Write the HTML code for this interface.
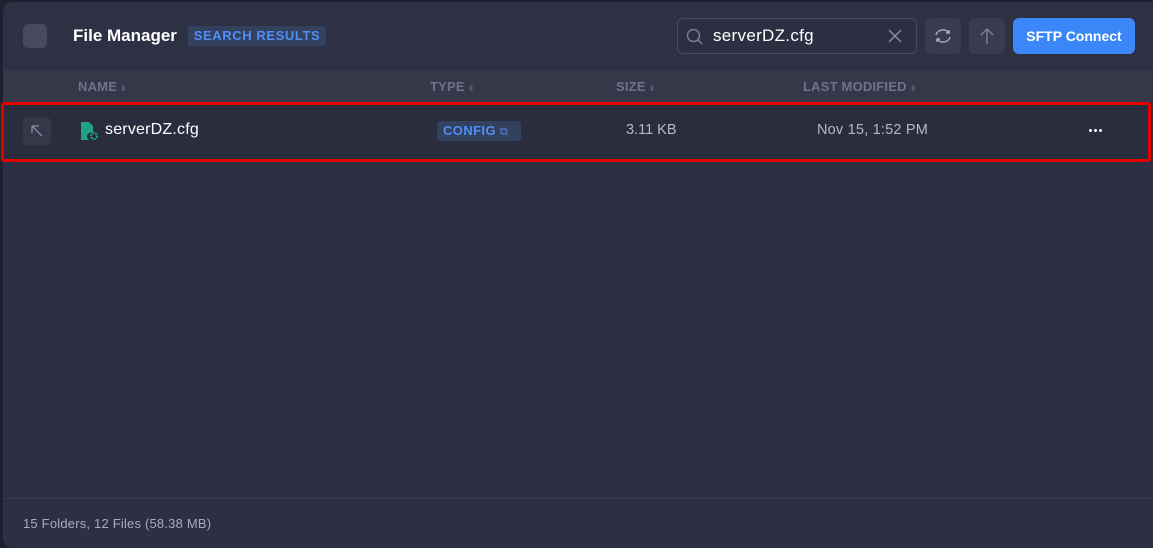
<!DOCTYPE html>
<html style="overflow:hidden;width:1153px;height:548px"><head><meta charset="utf-8"><style>
*{box-sizing:border-box;margin:0;padding:0}
body{width:1153px;height:548px;background:#1e2130;font-family:"Liberation Sans",sans-serif;overflow:hidden;position:relative}
.panel{position:absolute;left:3px;top:2px;width:1150px;height:546px;background:#2d3042;border-radius:10px 0 0 10px}
.top{position:absolute;left:3px;top:2px;width:1150px;height:68px;background:#2e3143;border-radius:10px 0 0 0}
.thead{position:absolute;left:3px;top:70px;width:1150px;height:32px;background:#353849}
.th{position:absolute;top:79px;font-size:13px;font-weight:bold;color:#6f7388;letter-spacing:0.2px}
.th span{font-size:8px;color:#555a6d;margin-left:3px}
.row{position:absolute;left:1px;top:102px;width:1150px;height:60px;border:3px solid #e50000;border-radius:3px;background:#2a2d3e}
.foot{position:absolute;left:3px;top:498px;width:1150px;height:1px;background:#393c4e}
</style></head><body>
<div class="panel"></div>
<div class="top"></div>
<div style="position:absolute;left:23px;top:24px;width:24px;height:24px;background:#464a5c;border-radius:5px"></div>
<div style="position:absolute;left:73px;top:26px;font-size:17px;font-weight:bold;color:#fff">File Manager</div>
<div style="position:absolute;left:188px;top:26px;width:138px;height:20px;background:#33415e;border-radius:3px;color:#4f8ef5;font-size:13px;font-weight:bold;text-align:center;line-height:20px;letter-spacing:0.6px">SEARCH RESULTS</div>
<div style="position:absolute;left:677px;top:18px;width:240px;height:36px;border:1px solid #474b5d;border-radius:6px;background:#2c2f41"></div>
<svg style="position:absolute;left:685px;top:27px" width="20" height="20" viewBox="0 0 20 20"><circle cx="8.5" cy="8.5" r="6" fill="none" stroke="#7d8194" stroke-width="1.4"/><line x1="13" y1="13" x2="17" y2="17" stroke="#7d8194" stroke-width="1.4"/></svg>
<div style="position:absolute;left:713px;top:26px;font-size:17px;color:#fff;letter-spacing:0.3px">serverDZ.cfg</div>
<svg style="position:absolute;left:888px;top:29px" width="14" height="14"><path d="M1 1L13 13M13 1L1 13" stroke="#8f93a5" stroke-width="1.4"/></svg>
<div style="position:absolute;left:925px;top:18px;width:36px;height:36px;background:#393c4e;border-radius:6px"></div>
<svg style="position:absolute;left:933px;top:26px" width="20" height="20" viewBox="0 0 20 20" fill="none" stroke="#aeb2c2" stroke-width="1.4"><path d="M3 9a7 6 0 0 1 13-2M16 4v3h-3M17 11a7 6 0 0 1-13 2M4 16v-3h3"/></svg>
<div style="position:absolute;left:969px;top:18px;width:36px;height:36px;background:#393c4e;border-radius:6px"></div>
<svg style="position:absolute;left:977px;top:26px" width="20" height="20" fill="none" stroke="#7d8194" stroke-width="1.4"><path d="M10 3v15M4 9l6-6 6 6"/></svg>
<div style="position:absolute;left:1013px;top:18px;width:122px;height:36px;background:#3b87f7;border-radius:6px;color:#fff;font-weight:bold;font-size:14px;text-align:center;line-height:36px">SFTP Connect</div>
<div class="thead"></div>
<div class="th" style="left:78px">NAME<span>⬍</span></div>
<div class="th" style="left:430px">TYPE<span>⬍</span></div>
<div class="th" style="left:616px">SIZE<span>⬍</span></div>
<div class="th" style="left:803px">LAST MODIFIED<span>⬍</span></div>
<div class="row"></div>
<div style="position:absolute;left:23px;top:117px;width:28px;height:28px;background:#353849;border-radius:5px"></div>
<svg style="position:absolute;left:29px;top:123px" width="16" height="16" fill="none" stroke="#8a8ea0" stroke-width="1.3"><path d="M3 3l10 10M3 3v7M3 3h7"/></svg>
<svg style="position:absolute;left:80px;top:122px" width="18" height="19" viewBox="0 0 18 19"><path d="M1 0h8l4 4v7a4 4 0 0 0-4 7H1z" fill="#1ea389"/><circle cx="14" cy="14" r="3" fill="none" stroke="#1ea389" stroke-width="2" stroke-dasharray="2 1"/></svg>
<div style="position:absolute;left:105px;top:121px;font-size:16px;color:#fff;letter-spacing:0.2px">serverDZ.cfg</div>
<div style="position:absolute;left:437px;top:121px;width:84px;height:20px;background:#33415e;border-radius:3px;color:#4f8ef5;font-size:13px;font-weight:bold;line-height:20px;padding-left:6px;letter-spacing:0.4px">CONFIG <span style="font-weight:normal;font-size:11px">⧉</span></div>
<div style="position:absolute;left:626px;top:122px;font-size:14.5px;color:#b4b8c8">3.11 KB</div>
<div style="position:absolute;left:817px;top:122px;font-size:14.5px;color:#b4b8c8;letter-spacing:0.2px">Nov 15, 1:52 PM</div>
<div style="position:absolute;left:1088px;top:129px;width:14px;height:3px;background:radial-gradient(circle,#fff 1.3px,transparent 1.6px) 0 0/5px 3px"></div>
<div class="foot"></div>
<div style="position:absolute;left:23px;top:516px;font-size:13px;color:#a6abc0;letter-spacing:0.2px">15 Folders, 12 Files (58.38 MB)</div>
</body></html>
